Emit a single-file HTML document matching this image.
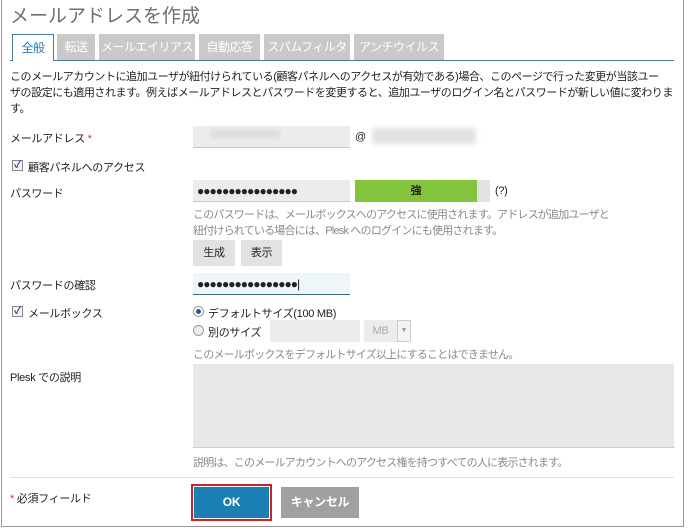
<!DOCTYPE html>
<html><head><meta charset="utf-8"><style>
*{margin:0;padding:0;box-sizing:border-box}
body{width:690px;height:531px;background:#fff;position:relative;overflow:hidden;font-family:"Liberation Sans","Noto Sans CJK JP",sans-serif;font-size:11px;color:#222;letter-spacing:-0.3px}
.a{position:absolute;white-space:nowrap}
.frame{position:absolute;left:1px;top:-2px;width:683px;height:529px;border:1px solid #999}
.tab{position:absolute;top:34px;height:26px;background:#c9c9c9;color:#fff;font-size:12px;line-height:26px;text-align:center;letter-spacing:-0.5px}
.inp{position:absolute;background:#ececec;border-bottom:1px solid #c8c8c8}
.help{color:#8a8a8a;letter-spacing:-0.8px}
.btn{position:absolute;background:#e2e2e2;text-align:center;line-height:26px}
.cb{position:absolute;width:11px;height:11px;border:1px solid #888;background:#f4f4f4;font-size:10px;line-height:9px;text-align:center;color:#2a4a8a;font-weight:bold}
.rd{position:absolute;width:11px;height:11px;border:1px solid #999;border-radius:50%;background:#eee}
</style></head><body>
<div class="frame"></div>
<div class="a" style="left:10px;top:1px;font-size:19px;color:#707070;letter-spacing:0">メールアドレスを作成</div>
<div class="tab" style="left:12px;width:42px;background:#fff;color:#2a7ab0;border:1px solid #4a7a99;border-bottom:none;height:27px;z-index:2">全般</div>
<div class="tab" style="left:57px;width:38px">転送</div>
<div class="tab" style="left:99px;width:96px">メールエイリアス</div>
<div class="tab" style="left:199px;width:61px">自動応答</div>
<div class="tab" style="left:264px;width:86px">スパムフィルタ</div>
<div class="tab" style="left:354px;width:90px">アンチウイルス</div>
<div class="a" style="left:10px;top:60px;width:664px;height:1px;background:#4a7a99"></div>
<div class="a" style="left:10px;top:69px;line-height:16px;letter-spacing:-0.45px">このメールアカウントに追加ユーザが紐付けられている(顧客パネルへのアクセスが有効である)場合、このページで行った変更が当該ユー<br>ザの設定にも適用されます。例えばメールアドレスとパスワードを変更すると、追加ユーザのログイン名とパスワードが新しい値に変わりま<br>す。</div>
<div class="a" style="left:10px;top:130px">メールアドレス <span style="color:#c33">*</span></div>
<div class="inp" style="left:193px;top:126px;width:157px;height:22px"></div>
<div class="a" style="left:210px;top:130px;width:70px;height:8px;background:#ddd;filter:blur(2px)"></div>
<div class="a" style="left:355px;top:131px">@</div>
<div class="a" style="left:372px;top:128px;width:104px;height:16px;background:#e0e0e0;filter:blur(3px)"></div>
<div class="cb" style="left:12px;top:160px">✓</div>
<div class="a" style="left:28px;top:159px">顧客パネルへのアクセス</div>
<div class="a" style="left:10px;top:185px">パスワード</div>
<div class="inp" style="left:193px;top:180px;width:157px;height:22px"></div>
<div class="a" style="left:197px;top:184px;font-size:12px;letter-spacing:-1px">●●●●●●●●●●●●●●●●</div>
<div class="a" style="left:355px;top:180px;width:122px;height:22px;background:#84c43d;text-align:center;line-height:22px;font-size:11px;font-weight:bold">強</div>
<div class="a" style="left:477px;top:180px;width:13px;height:22px;background:#e2e2e2"></div>
<div class="a" style="left:495px;top:185px;font-size:11px">(?)</div>
<div class="a help" style="left:193px;top:207px;line-height:16px">このパスワードは、メールボックスへのアクセスに使用されます。アドレスが追加ユーザと<br>紐付けられている場合には、Plesk へのログインにも使用されます。</div>
<div class="btn" style="left:193px;top:240px;width:42px;height:26px">生成</div>
<div class="btn" style="left:241px;top:240px;width:41px;height:26px">表示</div>
<div class="a" style="left:10px;top:277px">パスワードの確認</div>
<div class="inp" style="left:193px;top:273px;width:157px;height:22px;background:#eef6fa;border-bottom:1px solid #3a6a8a"></div>
<div class="a" style="left:197px;top:277px;font-size:12px;letter-spacing:-1px">●●●●●●●●●●●●●●●●<span style="letter-spacing:0">|</span></div>
<div class="cb" style="left:12px;top:306px">✓</div>
<div class="a" style="left:28px;top:305px">メールボックス</div>
<div class="rd" style="left:193px;top:306px;background:#fff"><div style="position:absolute;left:2px;top:2px;width:5px;height:5px;border-radius:50%;background:#1a5a9a"></div></div>
<div class="a" style="left:208px;top:305px">デフォルトサイズ(100 MB)</div>
<div class="rd" style="left:193px;top:325px"></div>
<div class="a" style="left:208px;top:324px">別のサイズ</div>
<div class="a" style="left:270px;top:320px;width:90px;height:22px;background:#ececec"></div>
<div class="a" style="left:364px;top:320px;width:33px;height:22px;background:#ececec;color:#aaa;line-height:22px;text-align:center">MB</div>
<div class="a" style="left:397px;top:320px;width:14px;height:22px;border:1px solid #ccc;background:#f4f4f4;color:#999;font-size:7px;text-align:center;line-height:20px">▼</div>
<div class="a help" style="left:193px;top:346px">このメールボックスをデフォルトサイズ以上にすることはできません。</div>
<div class="a" style="left:10px;top:369px">Plesk での説明</div>
<div class="a" style="left:193px;top:364px;width:481px;height:84px;background:#e8e8e8;border-bottom:1px solid #ccc"></div>
<div class="a help" style="left:193px;top:454px">説明は、このメールアカウントへのアクセス権を持つすべての人に表示されます。</div>
<div class="a" style="left:10px;top:477px;width:664px;height:1px;background:#ddd"></div>
<div class="a" style="left:10px;top:490px"><span style="color:#c33">*</span> 必須フィールド</div>
<div class="a" style="left:191px;top:484px;width:81px;height:37px;border:2px solid #c1272d"></div>
<div class="a" style="left:194px;top:487px;width:75px;height:31px;background:#1a7fb3;color:#fff;font-weight:bold;text-align:center;line-height:31px;font-size:12px">OK</div>
<div class="a" style="left:281px;top:487px;width:78px;height:31px;background:#a0a0a0;color:#fff;font-weight:bold;text-align:center;line-height:31px;font-size:12px">キャンセル</div>
</body></html>
